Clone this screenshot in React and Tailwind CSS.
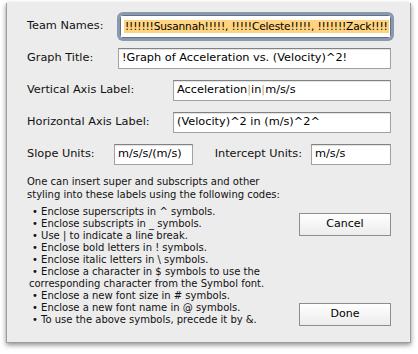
import React from 'react';

const Field = ({ children, className = '' }) => (
  <div
    className={`h-[21px] bg-white border border-[#a2a2a2] border-t-[#818181] shadow-[inset_0_1px_1px_rgba(0,0,0,0.12)] pl-[3px] flex items-center whitespace-nowrap overflow-hidden text-[11.3px] text-black ${className}`}
  >
    {children}
  </div>
);

const Btn = ({ children, className = '' }) => (
  <button
    className={`w-[92px] h-[23px] border border-[#8e8e8e] bg-linear-to-b from-white to-[#ececec] text-[11px] text-black flex items-center justify-center ${className}`}
  >
    {children}
  </button>
);

const bullets = [
  'Enclose superscripts in ^ symbols.',
  'Enclose subscripts in _ symbols.',
  'Use | to indicate a line break.',
  'Enclose bold letters in ! symbols.',
  'Enclose italic letters in \\ symbols.',
];

const bullets2 = [
  'Enclose a new font size in # symbols.',
  'Enclose a new font name in @ symbols.',
  'To use the above symbols, precede it by &.',
];

export default function App() {
  return (
    <div className="w-[418px] h-[354px] bg-white overflow-hidden font-['DejaVu_Sans',sans-serif]">
      <div className="mt-[3px] ml-[6px] w-[405px] h-[340px] bg-[#ececec] border-x border-b border-[#9c9c9c] shadow-[0_2px_5px_rgba(0,0,0,0.45)] pl-[20px] pr-[19px] pt-[13px] text-[#111]">
        {/* Fields */}
        <div className="flex flex-col gap-[11px] text-[11.3px] whitespace-nowrap">
          <div className="flex items-center h-[21px]">
            <span className="w-[93px] shrink-0">Team Names:</span>
            <div className="flex-1 min-w-0 rounded-[3px] ring-[3px] ring-[#8a99ae] border border-[#61718a]">
              <Field className="border-0 shadow-none pl-[1px]">
                <span className="bg-[#ffd37f] leading-[13px] px-[1px] text-[10.6px] tracking-[-0.15px]">
                  !!!!!!!Susannah!!!!!, !!!!!Celeste!!!!!, !!!!!!!Zack!!!!
                </span>
              </Field>
            </div>
          </div>
          <div className="flex items-center h-[21px]">
            <span className="w-[91px] shrink-0">Graph Title:</span>
            <Field className="flex-1 min-w-0">!Graph of Acceleration vs. (Velocity)^2!</Field>
          </div>
          <div className="flex items-center h-[21px]">
            <span className="w-[146px] shrink-0">Vertical Axis Label:</span>
            <Field className="flex-1 min-w-0">
              Acceleration<span className="text-[#c9a466]">|</span>in<span className="text-[#c9a466]">|</span>m/s/s
            </Field>
          </div>
          <div className="flex items-center h-[21px]">
            <span className="w-[146px] shrink-0">Horizontal Axis Label:</span>
            <Field className="flex-1 min-w-0">(Velocity)^2 in (m/s)^2^</Field>
          </div>
          <div className="flex items-center h-[21px]">
            <span className="w-[87px] shrink-0">Slope Units:</span>
            <Field className="w-[79px] shrink-0">m/s/s/(m/s)</Field>
            <span className="ml-auto mr-[9px]">Intercept Units:</span>
            <Field className="w-[80px] shrink-0">m/s/s</Field>
          </div>
        </div>

        {/* Help text + buttons */}
        <div className="flex mt-[11px]">
          <div className="flex-1 text-[10px] whitespace-nowrap">
            <p className="leading-[12.5px]">
              One can insert super and subscripts and other
              <br />
              styling into these labels using the following codes:
            </p>
            <ul className="mt-[5px] leading-[12px] pl-[5px]">
              {bullets.map((b) => (
                <li key={b}>• {b}</li>
              ))}
              <li>• Enclose a character in $ symbols to use the</li>
              <li className="-ml-[3px]">corresponding character from the Symbol font.</li>
              {bullets2.map((b) => (
                <li key={b}>• {b}</li>
              ))}
            </ul>
          </div>
          <div className="flex flex-col">
            <Btn className="mt-[37px]">Cancel</Btn>
            <Btn className="mt-[67px]">Done</Btn>
          </div>
        </div>
      </div>
    </div>
  );
}
